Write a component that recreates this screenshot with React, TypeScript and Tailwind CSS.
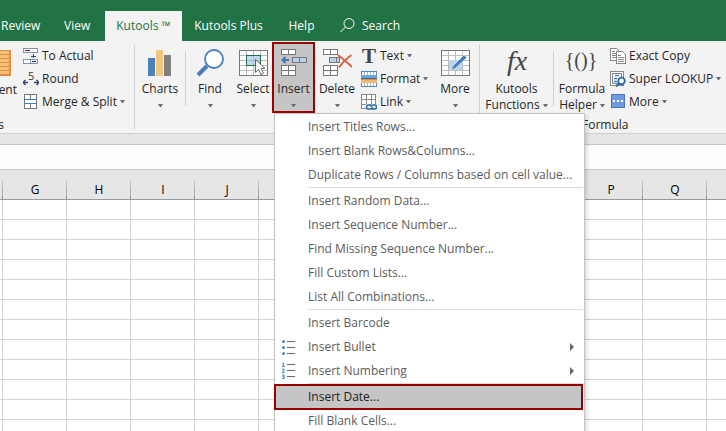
import type { ReactNode } from "react";

const columns = ["G", "H", "I", "J", "K", "L", "M", "N", "O", "P", "Q", "R"];
const rows = Array.from({ length: 12 }, (_, i) => i + 1);

function Caret() {
  return (
    <svg width="5" height="3" viewBox="0 0 5 3" className="shrink-0">
      <path d="M0 0h5L3 3H2z" fill="#6b6b6b" />
    </svg>
  );
}

function PercentIcon() {
  return (
    <svg width="26" height="26" viewBox="0 0 26 26" shapeRendering="crispEdges">
      <rect width="26" height="26" fill="#e58e3f" />
      {[1, 5, 9, 13, 17, 21].map((y) => (
        <rect key={y} x="2" y={y} width="22" height="3" fill="#f3c07c" />
      ))}
    </svg>
  );
}

function ActualIcon() {
  return (
    <svg width="16" height="16" viewBox="0 0 16 16" shapeRendering="crispEdges">
      <path d="M.5.5h14v4H.5zM.5 11.5h14v4H.5zM7.5 11.5v4" fill="#fff" stroke="#8490b0" />
      <path d="M2 2.5h5" stroke="#8a0f1c" />
      <path d="M9 13.5h4" stroke="#1a1ae0" />
      <path d="M10.5 6v4M8 8.5h5" stroke="#3a4a75" />
    </svg>
  );
}

function RoundIcon() {
  return (
    <svg width="16" height="16" viewBox="0 0 16 16">
      <text x="5" y="9" fontSize="11" fontFamily="Open Sans, sans-serif" fill="#333">
        5
      </text>
      <path
        d="M0 11.5h5M2.5 9L0 11.5 2.5 14M11 11.5h5M13.5 9l2.5 2.5-2.5 2.5"
        fill="none"
        stroke="#2f4a7a"
        strokeWidth="1.4"
      />
    </svg>
  );
}

function MergeIcon() {
  return (
    <svg width="16" height="16" viewBox="0 0 16 16" shapeRendering="crispEdges">
      <path d="M1.5.5h12v14h-12zM7.5 0v5M7.5 10v5" fill="#fff" stroke="#777" />
      <path d="M1 5.5h13M1 9.5h13" stroke="#3f7fc1" />
    </svg>
  );
}

function ChartsIcon() {
  return (
    <svg width="26" height="26" viewBox="0 0 26 26" shapeRendering="crispEdges">
      <rect x="1" y="8" width="7" height="18" fill="#4e81b8" />
      <rect x="9" width="7" height="26" fill="#f0c77d" />
      <rect x="17" y="5" width="7" height="21" fill="#7f7f7f" />
    </svg>
  );
}

function FindIcon() {
  return (
    <svg width="28" height="28" viewBox="0 0 28 28">
      <path d="M11 17L2 26" stroke="#4a7ebb" strokeWidth="4" />
      <circle cx="18" cy="10" r="9" fill="#fff" stroke="#4a7ebb" strokeWidth="1.8" />
    </svg>
  );
}

function SheetGrid() {
  return (
    <>
      <path d="M.5.5h28v25H.5z" fill="#fff" stroke="#777" />
      <path
        d="M1 5.5h27M1 10.5h27M1 15.5h27M1 20.5h27M7.5 1v24M14.5 1v24M21.5 1v24"
        stroke="#bcbcbc"
      />
    </>
  );
}

function SelectIcon() {
  return (
    <svg width="29" height="26" viewBox="0 0 29 26">
      <g shapeRendering="crispEdges">
        <SheetGrid />
        <path d="M7.5 5.5h14v10h-14z" fill="#c3d8ec" stroke="#217346" />
        <path d="M14.5 6v9M8 10.5h13" stroke="#a9bfd3" />
      </g>
      <path d="M16.5 9.5v13l3-3 2.5 5 2.5-1.2-2.3-4.8H26z" fill="#fff" stroke="#666" />
    </svg>
  );
}

function InsertIcon() {
  return (
    <svg width="26" height="28" viewBox="0 0 26 28">
      <g shapeRendering="crispEdges" stroke="#777" fill="#fff">
        <path d="M.5.5h14v5H.5zM7.5.5v5M.5 16.5h14v10H.5zM7.5 16v10M.5 21.5h14" />
        <path d="M11.5 8.5h14v5h-14zM18.5 9v5" fill="#bcd3ea" />
      </g>
      <path d="M8 11H2M4.5 8l-3 3 3 3" fill="none" stroke="#4078b8" strokeWidth="2" />
    </svg>
  );
}

function DeleteIcon() {
  return (
    <svg width="29" height="28" viewBox="0 0 29 28">
      <g shapeRendering="crispEdges" stroke="#777" fill="#fff">
        <path d="M.5.5h14v5H.5zM7.5.5v5M.5 16.5h14v10H.5zM7.5 16v10M.5 21.5h14" />
        <path d="M6.5 8.5h10v5h-10zM13.5 9v5" fill="#bcd3ea" />
      </g>
      <path d="M15 6c5 4 9 7 14 12M28.5 6C24 9 20 13 16 18.5" fill="none" stroke="#dc6444" strokeWidth="2" />
    </svg>
  );
}

function TextIcon() {
  return (
    <svg width="16" height="16" viewBox="0 0 16 16">
      <text x="1" y="15" fontSize="21" fontWeight="bold" fontFamily="Liberation Serif, serif" fill="#444">
        T
      </text>
    </svg>
  );
}

function FormatIcon() {
  return (
    <svg width="16" height="16" viewBox="0 0 16 16" shapeRendering="crispEdges">
      <path d="M.5.5h15v15H.5zM3.5 1v15M6.5 1v15M9.5 1v15M12.5 1v15" fill="#fff" stroke="#a5b4c6" />
      <path d="M.5.5h15v15H.5z" fill="none" stroke="#5a86b8" />
      <rect y="4" width="16" height="4" fill="#6ea3d8" />
      <rect y="7" width="16" height="1" fill="#35679f" />
      <rect y="8" width="16" height="4" fill="#f3b877" />
      <rect y="8" width="16" height="1" fill="#e08a3c" />
    </svg>
  );
}

function LinkIcon() {
  return (
    <svg width="16" height="16" viewBox="0 0 16 16">
      <path
        d="M.5.5h14v14H.5zM5.5.5v14M10.5.5v14M.5 5.5h14M.5 10.5h14"
        fill="#fff"
        stroke="#888"
        shapeRendering="crispEdges"
      />
      <path d="M5 10h11v6H5z" fill="#f3f3f3" />
      <path
        d="M10 11H7.5a2 2 0 0 0 0 4h2a2 2 0 0 0 2-2M11 15h2.5a2 2 0 0 0 0-4H12a2 2 0 0 0-2 2"
        fill="none"
        stroke="#2a66a8"
        strokeWidth="1.5"
      />
    </svg>
  );
}

function MoreIcon() {
  return (
    <svg width="29" height="26" viewBox="0 0 29 26">
      <g shapeRendering="crispEdges">
        <SheetGrid />
        <path d="M8 10h13v10H8z" fill="#bcd3ea" />
      </g>
      <path d="M10 20l2-4L23 5l3 2.5-12 11z" fill="#3f7fc1" stroke="#fff" strokeWidth=".5" />
    </svg>
  );
}

function FxIcon() {
  return (
    <svg width="28" height="28" viewBox="0 0 28 28">
      <text x="4" y="21" fontSize="28" fontStyle="italic" fontFamily="Liberation Serif, serif" fill="#444">
        fx
      </text>
    </svg>
  );
}

function BracesIcon() {
  return (
    <svg width="32" height="28" viewBox="0 0 32 28">
      <text x="15" y="18" textAnchor="middle" fontSize="20" fontFamily="Liberation Serif, serif" fill="#444">
        {"{()}"}
      </text>
    </svg>
  );
}

function CopyIcon() {
  return (
    <svg width="16" height="16" viewBox="0 0 16 16" shapeRendering="crispEdges">
      <path d="M.5.5h6l3 3v9h-9zM2 3.5h3M2 5.5h5M2 7.5h5M2 9.5h5" fill="#fff" stroke="#888" />
      <path d="M6.5 3.5h6l3 3v9h-9zM8 7.5h3M8 9.5h6M8 11.5h6M8 13.5h6" fill="#fff" stroke="#888" />
    </svg>
  );
}

function LookupIcon() {
  return (
    <svg width="16" height="16" viewBox="0 0 16 16">
      <path d="M.5.5h13v14H.5zM2.5 2.5h9v10h-9z" fill="#fff" stroke="#888" shapeRendering="crispEdges" />
      <path d="M5 4.5h4M4 7.5h3M4 10.5h3" stroke="#3f7fc1" strokeWidth="1.5" />
      <circle cx="11.5" cy="10" r="3.3" fill="#fff" stroke="#2a66a8" strokeWidth="1.8" />
      <path d="M9 12.5l-3 3" stroke="#2a66a8" strokeWidth="2" />
    </svg>
  );
}

function DotsIcon() {
  return (
    <svg width="16" height="16" viewBox="0 0 16 16" shapeRendering="crispEdges">
      <path d="M1.5.5h13v13h-13z" fill="#6e9be0" stroke="#4a76c0" />
      <path d="M3 6h2v2H3zM7 6h2v2H7zM11 6h2v2h-2z" fill="#fff" />
    </svg>
  );
}

function BulletIcon() {
  return (
    <svg width="16" height="16" viewBox="0 0 16 16">
      <path d="M5 2.5h8M5 8.5h8M5 14.5h8" stroke="#666" shapeRendering="crispEdges" />
      <g fill="#4a86c0">
        <circle cx="1.5" cy="2.5" r="1.5" />
        <circle cx="1.5" cy="8.5" r="1.5" />
        <circle cx="1.5" cy="14.5" r="1.5" />
      </g>
    </svg>
  );
}

function NumberingIcon() {
  return (
    <svg width="16" height="18" viewBox="0 0 16 18">
      <path d="M5 2.5h8M5 8.5h8M5 14.5h8" stroke="#666" shapeRendering="crispEdges" />
      <g fontSize="6" fontWeight="bold" fontFamily="DejaVu Sans, sans-serif" fill="#3f7fb5">
        <text x="-1" y="5">1</text>
        <text x="-1" y="11">2</text>
        <text x="-1" y="17">3</text>
      </g>
    </svg>
  );
}

interface BigButtonProps {
  icon: ReactNode;
  label: string;
  second?: string;
  className: string;
}

function BigButton({ icon, label, second, className }: BigButtonProps) {
  return (
    <button className={`flex h-[71px] shrink-0 flex-col items-center whitespace-nowrap ${className}`}>
      <span className="flex h-10 items-center pt-0.5">{icon}</span>
      <span className="h-4 leading-4">{label}</span>
      <span className="flex h-4 items-center gap-[3px] leading-4">
        {second}
        <Caret />
      </span>
    </button>
  );
}

interface SmallButtonProps {
  icon: ReactNode;
  label: string;
  caret?: boolean;
}

function SmallButton({ icon, label, caret }: SmallButtonProps) {
  return (
    <button className="flex h-[23px] items-center gap-[3px] whitespace-nowrap">
      {icon}
      <span>{label}</span>
      {caret && <Caret />}
    </button>
  );
}

function MenuItem({ label, icon, arrow }: { label: string; icon?: ReactNode; arrow?: boolean }) {
  return (
    <button role="menuitem" className="flex h-6 w-full items-center pr-[9px] text-left">
      <span className="flex w-[33px] shrink-0 pl-[7px]">{icon}</span>
      <span className="flex-1">{label}</span>
      {arrow && (
        <svg width="6" height="8" viewBox="0 0 6 8">
          <path d="M1 0l4 4-4 4z" fill="#666" />
        </svg>
      )}
    </button>
  );
}

function Separator() {
  return <div className="mr-px ml-[33px] h-[2px] border-t border-[#dcdcdc]" />;
}

function InsertMenu() {
  return (
    <div
      role="menu"
      className="absolute top-full left-[2px] z-10 w-[311px] border border-[#c3c3c3] bg-white py-px text-[#5c5c5c] shadow-[2px_2px_4px_rgba(0,0,0,0.15)]"
    >
      <MenuItem label="Insert Titles Rows..." />
      <MenuItem label="Insert Blank Rows&Columns..." />
      <MenuItem label="Duplicate Rows / Columns based on cell value..." />
      <Separator />
      <MenuItem label="Insert Random Data..." />
      <MenuItem label="Insert Sequence Number..." />
      <MenuItem label="Find Missing Sequence Number..." />
      <MenuItem label="Fill Custom Lists..." />
      <MenuItem label="List All Combinations..." />
      <Separator />
      <MenuItem label="Insert Barcode" />
      <MenuItem label="Insert Bullet" icon={<BulletIcon />} arrow />
      <MenuItem label="Insert Numbering" icon={<NumberingIcon />} arrow />
      <Separator />
      <div className="mr-0.5 bg-[#c5c5c5] text-[#222] outline-2 -outline-offset-1 outline-[#990000]">
        <MenuItem label="Insert Date..." />
      </div>
      <MenuItem label="Fill Blank Cells..." />
    </div>
  );
}

export default function App() {
  return (
    <div className="flex h-screen flex-col overflow-hidden bg-white font-['Open_Sans','Noto_Sans',sans-serif] text-[12px] text-[#262626]">
      <nav className="flex h-[41px] shrink-0 items-end bg-[#217346] whitespace-nowrap text-white">
        <a href="#review" className="flex h-[30px] w-[52px] items-center pl-px">Review</a>
        <a href="#view" className="flex h-[30px] w-[53px] items-center pl-3">View</a>
        <a href="#kutools" className="flex h-[30px] w-[77px] items-center justify-center bg-[#f3f3f3] text-[#217346]">
          Kutools ™
        </a>
        <a href="#plus" className="flex h-[30px] w-[93px] items-center justify-center">Kutools Plus</a>
        <a href="#help" className="flex h-[30px] w-[53px] items-center justify-center">Help</a>
        <button className="flex h-[30px] items-center gap-[7px] pl-3">
          <svg width="15" height="16" viewBox="0 0 15 16" fill="none" stroke="#fff">
            <circle cx="9" cy="5.5" r="5" />
            <path d="M5.5 9l-5 5" />
          </svg>
          Search
        </button>
      </nav>

      <div className="relative z-10 flex h-[93px] shrink-0 border-b border-[#d0d0d0] bg-[#f3f3f3] pt-px">
        <section className="flex w-[134px] shrink-0 flex-col">
          <div className="flex h-[71px]">
            <button className="flex w-[23px] flex-col items-end overflow-hidden pr-1.5">
              <span className="flex h-10 items-center pt-0.5 pr-1.5">
                <PercentIcon />
              </span>
              <span className="h-4 leading-4">Percent</span>
            </button>
            <div className="flex flex-col pt-0.5">
              <SmallButton icon={<ActualIcon />} label="To Actual" />
              <SmallButton icon={<RoundIcon />} label="Round" />
              <SmallButton icon={<MergeIcon />} label="Merge & Split" caret />
            </div>
          </div>
          <div className="flex w-1 justify-end leading-6">Cells</div>
        </section>

        <div className="mt-[3px] h-[84px] w-px shrink-0 bg-[#d0d0d0]" />
        <BigButton icon={<ChartsIcon />} label="Charts" className="w-[50px]" />
        <div className="mt-[9px] h-[55px] w-px shrink-0 bg-[#d0d0d0]" />
        <BigButton icon={<FindIcon />} label="Find" className="w-[48px]" />
        <BigButton icon={<SelectIcon />} label="Select" className="w-[38px]" />
        <div className="relative shrink-0 self-start">
          <BigButton
            icon={<InsertIcon />}
            label="Insert"
            className="w-[43px] bg-[#c5c5c5] outline-2 -outline-offset-2 outline-[#990000]"
          />
          <InsertMenu />
        </div>
        <BigButton icon={<DeleteIcon />} label="Delete" className="w-[44px]" />
        <div className="flex w-[72px] shrink-0 flex-col pt-0.5 pl-0.5">
          <SmallButton icon={<TextIcon />} label="Text" caret />
          <SmallButton icon={<FormatIcon />} label="Format" caret />
          <SmallButton icon={<LinkIcon />} label="Link" caret />
        </div>
        <BigButton icon={<MoreIcon />} label="More" className="w-[48px]" />
        <div className="mt-[3px] h-[84px] w-px shrink-0 bg-[#d0d0d0]" />
        <BigButton icon={<FxIcon />} label="Kutools" second="Functions" className="w-[73px]" />

        <div className="mt-[9px] h-[55px] w-px shrink-0 bg-[#d0d0d0]" />
        <section className="flex flex-col">
          <div className="flex h-[71px]">
            <BigButton icon={<BracesIcon />} label="Formula" second="Helper" className="w-[56px]" />
            <div className="flex flex-col pt-0.5">
              <SmallButton icon={<CopyIcon />} label="Exact Copy" />
              <SmallButton icon={<LookupIcon />} label="Super LOOKUP" caret />
              <SmallButton icon={<DotsIcon />} label="More" caret />
            </div>
          </div>
          <div className="pl-[28px] leading-6">Formula</div>
        </section>
      </div>

      <div className="shrink-0 bg-[#e6e6e6] pt-[10px]">
        <input
          aria-label="Formula bar"
          className="block h-[26px] w-full border-y border-[#c6c6c6] bg-[#fdfdfd] px-2 outline-none"
        />
      </div>

      <div className="overflow-hidden bg-[linear-gradient(#e6e6e6,#e6e6e6)] bg-[length:100%_30px] bg-no-repeat pt-[10px]">
        <table className="w-[771px] table-fixed border-separate border-spacing-0">
          <thead>
            <tr>
              <td className="h-5 w-[3px] border-b border-[#999] bg-[linear-gradient(#cfcfcf,#8f8f8f)] bg-[length:1px_100%] bg-right bg-no-repeat p-0" />
              {columns.map((name) => (
                <th
                  key={name}
                  className="h-5 border-b border-[#999] bg-[linear-gradient(#cfcfcf,#8f8f8f)] bg-[length:1px_100%] bg-right bg-no-repeat p-0 text-[12px] leading-4 font-normal text-black"
                >
                  {name}
                </th>
              ))}
            </tr>
          </thead>
          <tbody>
            {rows.map((row) => (
              <tr key={row}>
                <td className="h-5 border-r border-b border-[#d4d4d4] p-0" />
                {columns.map((name) => (
                  <td key={name} className="h-5 border-r border-b border-[#d4d4d4] p-0" />
                ))}
              </tr>
            ))}
          </tbody>
        </table>
      </div>
    </div>
  );
}
